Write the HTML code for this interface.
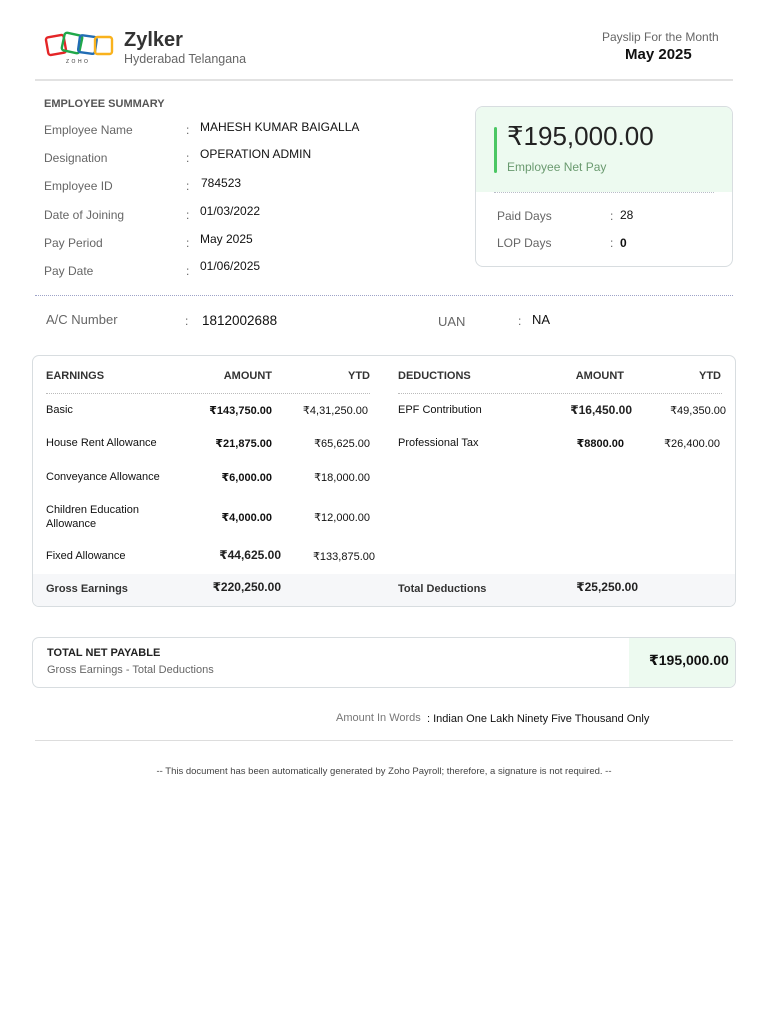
<!DOCTYPE html>
<html><head><meta charset="utf-8"><style>
*{margin:0;padding:0;box-sizing:border-box}
body{width:768px;height:1024px;background:#fff;font-family:"Liberation Sans","DejaVu Sans",sans-serif;color:#222;position:relative;overflow:hidden}
.a{position:absolute;white-space:nowrap}
.lbl{font-size:12px;color:#666}
.val{font-size:12px;color:#111}
.s{font-size:11px;color:#111}
.b{font-weight:bold}
.r{text-align:right}
</style></head><body>
<svg class="a" style="left:44px;top:30px" width="72" height="36" viewBox="0 0 72 36">
<rect x="3" y="6" width="18" height="18" rx="2.5" fill="none" stroke="#e42527" stroke-width="2.4" transform="rotate(-10 12 15)"/>
<rect x="19" y="4" width="18" height="18" rx="2.5" fill="none" stroke="#20a84a" stroke-width="2.4" transform="rotate(12 28 13)"/>
<rect x="35" y="6" width="17" height="17" rx="2.5" fill="none" stroke="#226db4" stroke-width="2.4" transform="rotate(8 43 14)"/>
<rect x="51" y="7" width="17" height="17" rx="2.5" fill="none" stroke="#f9b21d" stroke-width="2.4"/>
<text x="22" y="33" font-size="5" font-family="Liberation Sans" fill="#333" letter-spacing="2.5">ZOHO</text>
</svg>
<div class="a b" style="left:124px;top:29px;font-size:20px;color:#333">Zylker</div>
<div class="a" style="left:124px;top:52px;font-size:12.5px;color:#666">Hyderabad Telangana</div>
<div class="a" style="left:602px;top:30px;font-size:12px;color:#666">Payslip For the Month</div>
<div class="a b" style="left:625px;top:46px;font-size:15px;color:#111">May 2025</div>
<div class="a" style="left:35px;top:79px;width:698px;height:2px;background:#e2e2e2"></div>

<div class="a" style="left:44px;top:98px;font-size:11px;color:#555;font-weight:bold">EMPLOYEE SUMMARY</div>
<div class="a lbl" style="left:44px;top:123px">Employee Name</div><div class="a lbl" style="left:186px;top:123px">:</div><div class="a val" style="left:200px;top:120px">MAHESH KUMAR BAIGALLA</div>
<div class="a lbl" style="left:44px;top:151px">Designation</div><div class="a lbl" style="left:186px;top:151px">:</div><div class="a val" style="left:200px;top:147px">OPERATION ADMIN</div>
<div class="a lbl" style="left:44px;top:179px">Employee ID</div><div class="a lbl" style="left:186px;top:179px">:</div><div class="a val" style="left:201px;top:176px">784523</div>
<div class="a lbl" style="left:44px;top:208px">Date of Joining</div><div class="a lbl" style="left:186px;top:208px">:</div><div class="a val" style="left:200px;top:204px">01/03/2022</div>
<div class="a lbl" style="left:44px;top:236px">Pay Period</div><div class="a lbl" style="left:186px;top:236px">:</div><div class="a val" style="left:200px;top:232px">May 2025</div>
<div class="a lbl" style="left:44px;top:264px">Pay Date</div><div class="a lbl" style="left:186px;top:264px">:</div><div class="a val" style="left:200px;top:259px">01/06/2025</div>

<div class="a" style="left:475px;top:106px;width:258px;height:161px;border:1px solid #d8dde0;border-radius:8px;overflow:hidden">
<div style="position:absolute;left:0;top:0;width:100%;height:85px;background:#edfaf0"></div>
<div style="position:absolute;left:18px;top:20px;width:3px;height:46px;background:#4cc764;border-radius:2px"></div>
<div class="a" style="left:31px;top:14px;font-size:26px;color:#222">₹195,000.00</div>
<div class="a" style="left:31px;top:53px;font-size:12px;color:#6a9a6f">Employee Net Pay</div>
<div style="position:absolute;left:18px;top:85px;width:220px;border-top:1px dotted #b9bcc8"></div>
<div class="a lbl" style="left:21px;top:102px">Paid Days</div><div class="a lbl" style="left:134px;top:102px">:</div><div class="a val" style="left:144px;top:101px;font-size:12px">28</div>
<div class="a lbl" style="left:21px;top:129px">LOP Days</div><div class="a lbl" style="left:134px;top:129px">:</div><div class="a val b" style="left:144px;top:129px;font-size:12px">0</div>
</div>

<div class="a" style="left:35px;top:295px;width:698px;border-top:1px dotted #9ea3c8"></div>
<div class="a" style="left:46px;top:312px;font-size:13px;color:#666">A/C Number</div><div class="a lbl" style="left:185px;top:314px">:</div><div class="a val" style="left:202px;top:313px;font-size:13.5px">1812002688</div>
<div class="a" style="left:438px;top:314px;font-size:13px;color:#666">UAN</div><div class="a lbl" style="left:518px;top:314px">:</div><div class="a val" style="left:532px;top:312px;font-size:13px">NA</div>

<div class="a" style="left:32px;top:355px;width:704px;height:252px;border:1px solid #d8dde0;border-radius:7px;overflow:hidden">
<div style="position:absolute;left:0;top:218px;width:100%;height:34px;background:#f6f7f9"></div>
</div>
<div class="a s b" style="left:46px;top:370px;color:#333">EARNINGS</div>
<div class="a s b r" style="left:200px;top:370px;width:72px;color:#333">AMOUNT</div>
<div class="a s b r" style="left:300px;top:370px;width:70px;color:#333">YTD</div>
<div class="a" style="left:46px;top:393px;width:324px;border-top:1px dotted #bbb"></div>
<div class="a s b" style="left:398px;top:370px;color:#333">DEDUCTIONS</div>
<div class="a s b r" style="left:550px;top:370px;width:74px;color:#333">AMOUNT</div>
<div class="a s b r" style="left:650px;top:370px;width:71px;color:#333">YTD</div>
<div class="a" style="left:398px;top:393px;width:324px;border-top:1px dotted #bbb"></div>

<div class="a s" style="left:46px;top:404px">Basic</div><div class="a s b r" style="left:190px;top:404px;width:82px">₹143,750.00</div><div class="a s r" style="left:290px;top:404px;width:78px">₹4,31,250.00</div>
<div class="a s" style="left:46px;top:437px">House Rent Allowance</div><div class="a s b r" style="left:190px;top:437px;width:82px">₹21,875.00</div><div class="a s r" style="left:290px;top:437px;width:80px">₹65,625.00</div>
<div class="a s" style="left:46px;top:471px">Conveyance Allowance</div><div class="a s b r" style="left:190px;top:471px;width:82px">₹6,000.00</div><div class="a s r" style="left:290px;top:471px;width:80px">₹18,000.00</div>
<div class="a s" style="left:46px;top:503px;line-height:14px">Children Education<br>Allowance</div><div class="a s b r" style="left:190px;top:511px;width:82px">₹4,000.00</div><div class="a s r" style="left:290px;top:511px;width:80px">₹12,000.00</div>
<div class="a s" style="left:46px;top:550px">Fixed Allowance</div><div class="a b r" style="left:190px;top:548px;width:91px;font-size:12px">₹44,625.00</div><div class="a s r" style="left:290px;top:550px;width:85px">₹133,875.00</div>
<div class="a s b" style="left:46px;top:583px;color:#333">Gross Earnings</div><div class="a b r" style="left:190px;top:580px;width:91px;font-size:12px">₹220,250.00</div>

<div class="a s" style="left:398px;top:404px">EPF Contribution</div><div class="a b r" style="left:550px;top:403px;width:82px;font-size:12px">₹16,450.00</div><div class="a s r" style="left:650px;top:404px;width:76px">₹49,350.00</div>
<div class="a s" style="left:398px;top:437px">Professional Tax</div><div class="a s b r" style="left:550px;top:437px;width:74px">₹8800.00</div><div class="a s r" style="left:650px;top:437px;width:70px">₹26,400.00</div>
<div class="a s b" style="left:398px;top:583px;color:#333">Total Deductions</div><div class="a b r" style="left:550px;top:580px;width:88px;font-size:12px">₹25,250.00</div>

<div class="a" style="left:32px;top:637px;width:704px;height:51px;border:1px solid #d8dde0;border-radius:7px;overflow:hidden">
<div style="position:absolute;right:0;top:0;width:106px;height:100%;background:#edfaf0"></div>
</div>
<div class="a s b" style="left:47px;top:647px;color:#222">TOTAL NET PAYABLE</div>
<div class="a" style="left:47px;top:664px;font-size:11px;color:#666">Gross Earnings - Total Deductions</div>
<div class="a b" style="left:649px;top:652px;font-size:14px;color:#111">₹195,000.00</div>

<div class="a" style="left:336px;top:712px;font-size:11px;color:#777">Amount In Words</div>
<div class="a" style="left:427px;top:713px;font-size:11px;color:#111">: Indian One Lakh Ninety Five Thousand Only</div>
<div class="a" style="left:35px;top:740px;width:698px;border-top:1px solid #ddd"></div>
<div class="a" style="left:0;top:766px;width:768px;text-align:center;font-size:9.5px;color:#444">-- This document has been automatically generated by Zoho Payroll; therefore, a signature is not required. --</div>
</body></html>
